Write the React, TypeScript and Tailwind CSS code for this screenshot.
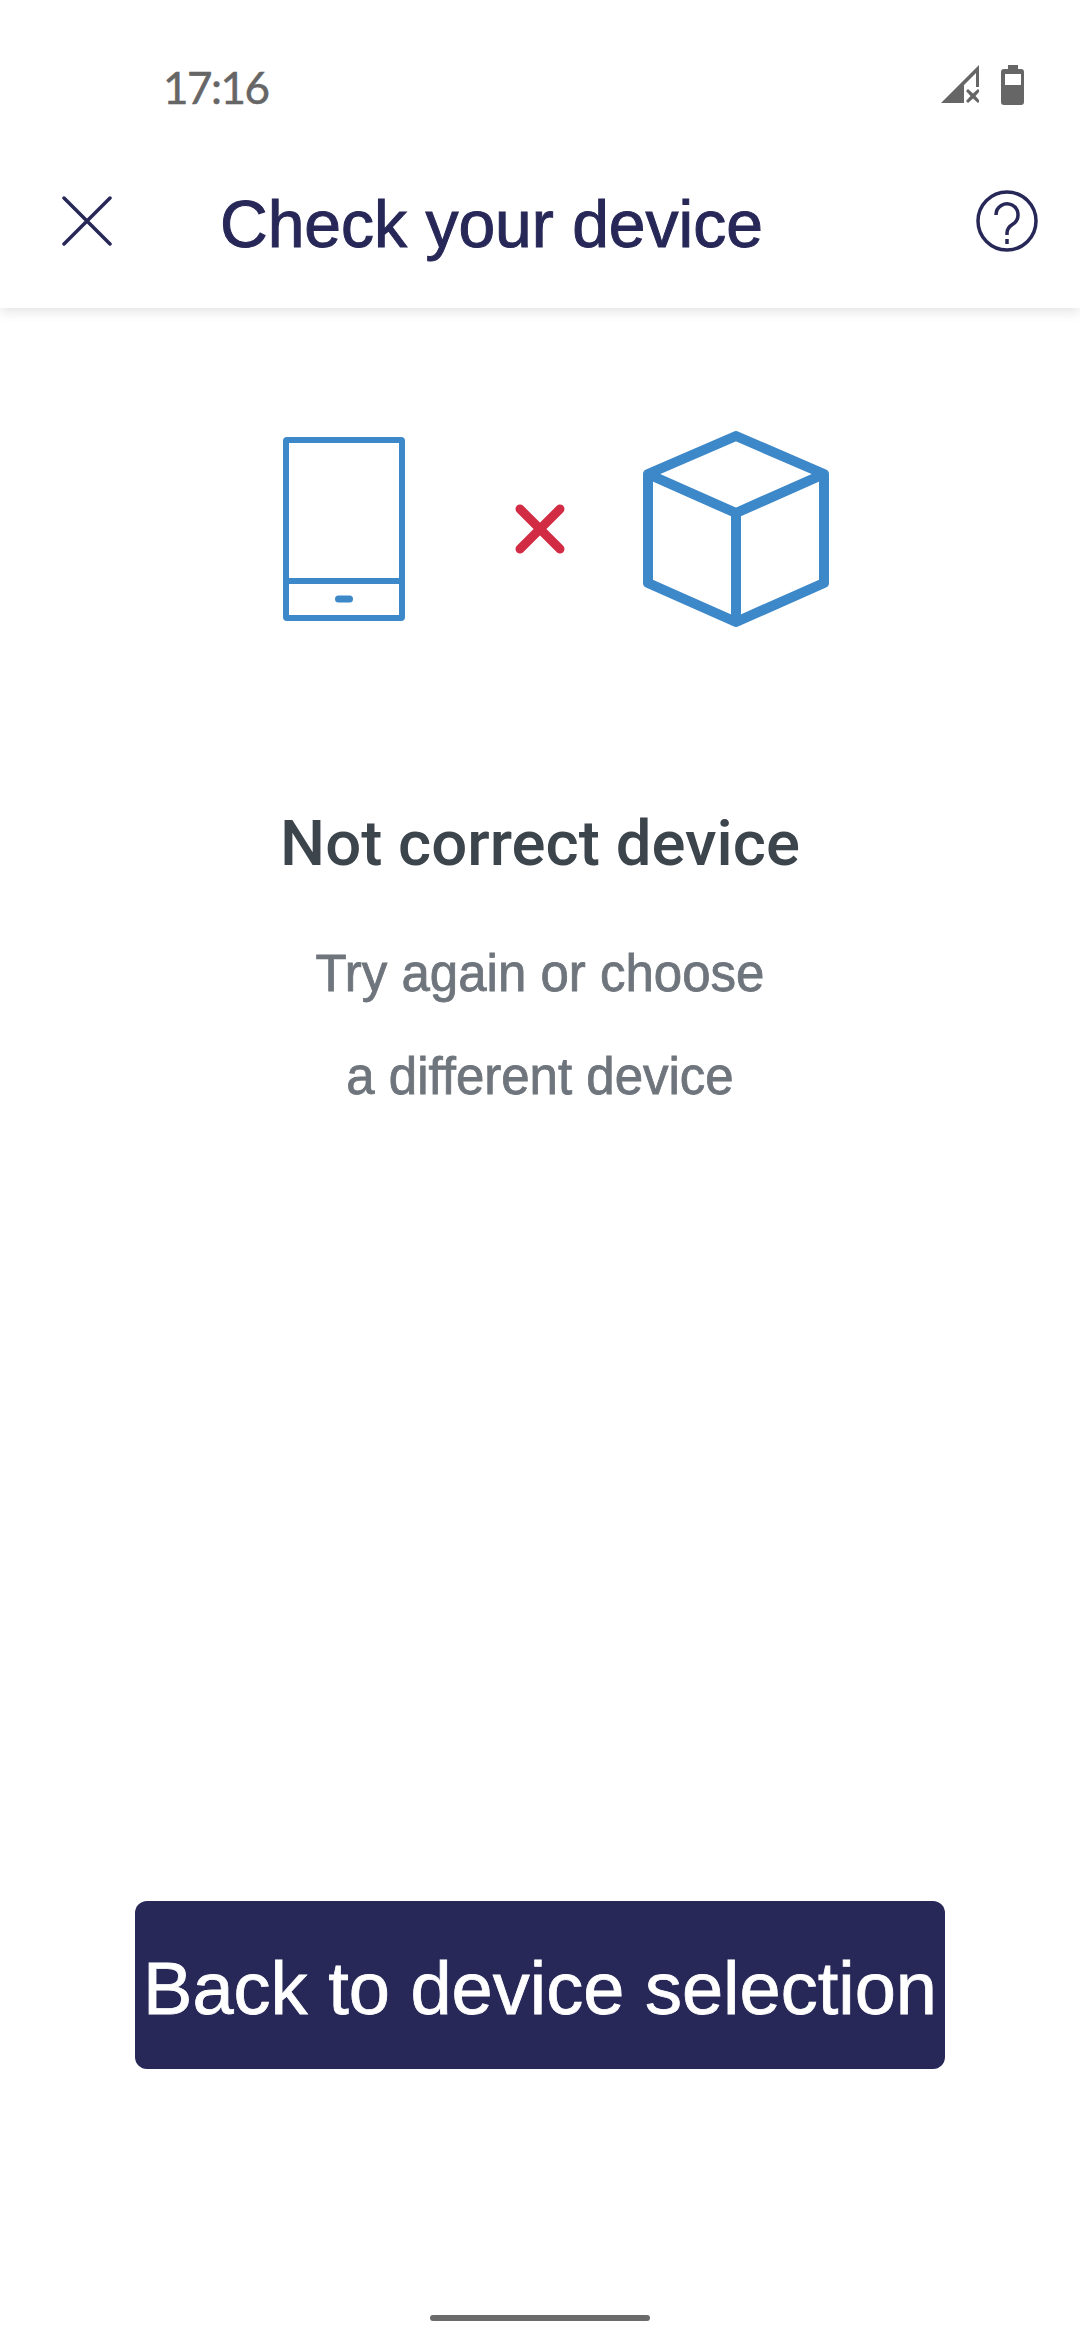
function DeviceIcon() {
  return (
    <svg width="122" height="184" viewBox="0 0 122 184" fill="none" stroke="#3d88c8" strokeWidth="6">
      <rect x="3" y="3" width="116" height="178" rx="1" />
      <path d="M3 144h116" />
      <path d="M55.500 162h11" strokeWidth="7" strokeLinecap="round" />
    </svg>
  );
}

function BoxIcon() {
  return (
    <svg width="186" height="196" viewBox="0 0 186 196" fill="none" stroke="#3d88c8" strokeWidth="10" strokeLinejoin="round">
      <path d="M93 5 181 43v109l-88 39-88-39V43Z" />
      <path d="M5 43l88 39 88-39M93 82v109" />
    </svg>
  );
}

export default function App() {
  return (
    <div className="relative flex h-[2340px] w-[1080px] flex-col overflow-hidden bg-white font-['Liberation_Sans',sans-serif]">
      <div className="relative z-10 bg-white shadow-[0_3px_12px_rgba(0,0,0,0.12)]">
        <div className="flex h-[133px] items-start justify-between pl-[163px] pr-[56px] pt-[62px]">
          <span className="font-['Lato',sans-serif] text-[44px] leading-[50px] tracking-[-1.5px] text-[#666666] [-webkit-text-stroke:0.5px_#666666]">17:16</span>
          <div className="mt-[3px] flex items-start gap-[22px]">
            <svg width="38" height="38" viewBox="0 0 38 38" fill="#666666">
              <path d="M38 0v22h-3V8L23 20v18H0Z" />
              <path d="m25 26 2-2 5 4.500 5-4.500 2 2-4.500 5 4.500 5-2 2-5-4.500-5 4.500-2-2 4.500-5Z" />
            </svg>
            <svg width="23" height="40" viewBox="0 0 23 40" fill="#666666">
              <path d="M7 0h10v4h3a3 3 0 0 1 3 3v30a3 3 0 0 1-3 3H3a3 3 0 0 1-3-3V7a3 3 0 0 1 3-3h4Z" />
              <rect x="4" y="9" width="16" height="11" fill="#ffffff" />
            </svg>
          </div>
        </div>
        <div className="flex h-[175px] items-center pl-[62px] pr-[42px]">
          <svg width="50" height="50" viewBox="0 0 50 50" fill="none" stroke="#272858" strokeWidth="3.500" strokeLinecap="round">
            <path d="M2 2l46 46M48 2 2 48" />
          </svg>
          <h1 className="ml-[108px] flex-1 pt-[7px] text-[66px] leading-[80px] text-[#272858] [-webkit-text-stroke:1px_#272858]">Check your device</h1>
          <svg width="62" height="62" viewBox="0 0 62 62" fill="none" stroke="#272858" strokeWidth="3.500">
            <circle cx="31" cy="31" r="29" />
            <path d="M20 25a11 11 0 1 1 17 9c-4 2.500-6 5-6 9v2M31 49v5" />
          </svg>
        </div>
      </div>

      <div className="flex flex-col items-center pt-[123px]">
        <div className="ml-[32px] flex h-[196px] items-center">
          <DeviceIcon />
          <svg className="ml-[110px] mr-[78px]" width="50" height="50" viewBox="0 0 50 50" fill="none" stroke="#d22c45" strokeWidth="9" strokeLinecap="round">
            <path d="M5 5l40 40M45 5 5 45" />
          </svg>
          <BoxIcon />
        </div>
        <h2 className="mt-[179px] font-['Roboto',sans-serif] text-[63.500px] font-medium leading-[76px] text-[#3c444c]">
          Not correct device
        </h2>
        <div className="mt-[40px] text-center text-[51px] leading-[103px] text-[#6f757c] [-webkit-text-stroke:0.8px_#6f757c]">
          <p>Try again or choose</p>
          <p>a different device</p>
        </div>
      </div>

      <div className="mt-auto flex flex-col items-center pb-[19px]">
        <button className="flex h-[168px] w-[810px] items-center justify-center whitespace-nowrap rounded-[12px] bg-[#272858] pt-[6px] text-[74px] text-white [-webkit-text-stroke:0.8px_#ffffff]">
          Back to device selection
        </button>
        <div className="mt-[246px] h-[6px] w-[220px] rounded-full bg-[#6b6b6b]" />
      </div>
    </div>
  );
}
